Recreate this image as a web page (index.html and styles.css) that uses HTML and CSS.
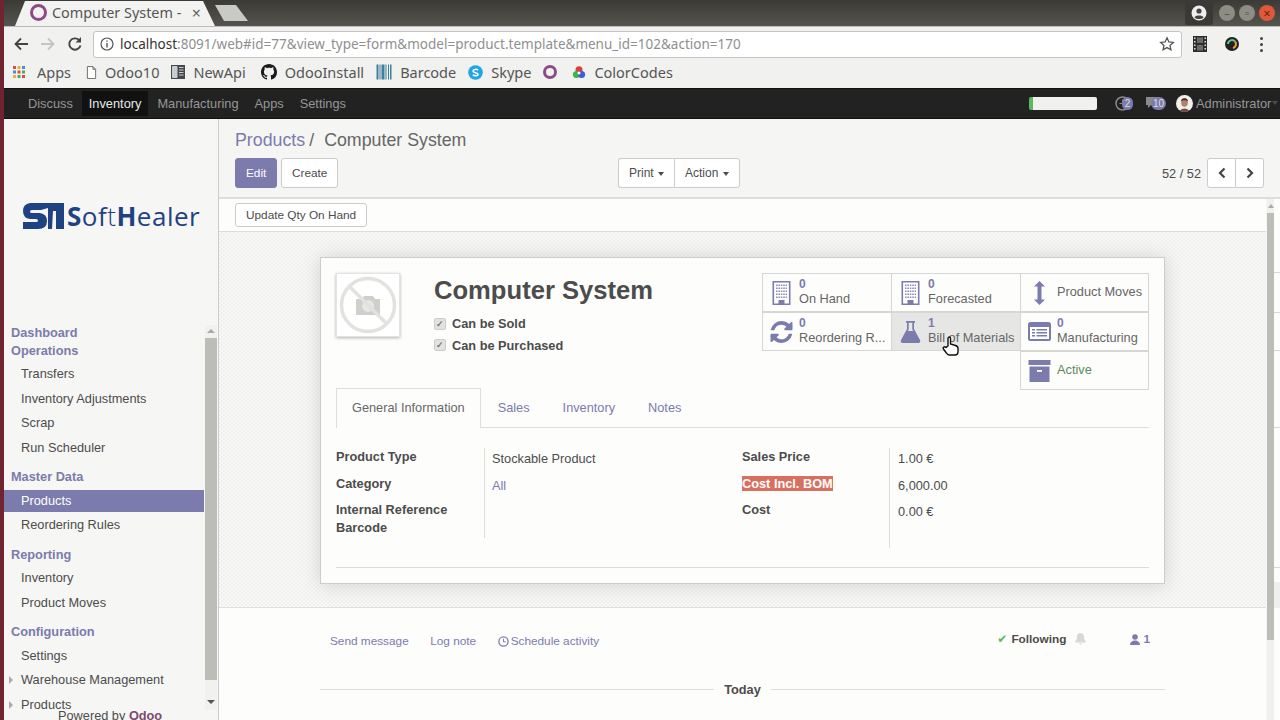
FILE: index.html
```html
<!DOCTYPE html>
<html lang="en">
<head>
    <meta charset="UTF-8">
    <title>Computer System - Odoo</title>
    <link rel="stylesheet" href="styles.css">
</head>
<body>
<div class="window">
    <div class="tabbar">
        <div class="tab">
            <span class="ring"></span>
            <span class="tab-title">Computer System -</span>
            <span class="tab-close">×</span>
        </div>
        <div class="new-tab"></div>
        <div class="win-controls">
            <span class="profile">
                <svg width="16" height="16" viewBox="0 0 16 16"><circle cx="8" cy="8" r="7.5" fill="#eee"/><circle cx="8" cy="6" r="2.6" fill="#444"/><path d="M3.5 12.5c1-2.6 8-2.6 9 0-2 2-7 2-9 0z" fill="#444"/></svg>
            </span>
            <span class="win-btn">–</span>
            <span class="win-btn">▫</span>
            <span class="win-btn win-close">×</span>
        </div>
    </div>

    <div class="toolbar">
        <svg class="nav-icon" width="16" height="16" viewBox="0 0 16 16"><path d="M15 8H3M8 2.500 2.500 8 8 13.500" fill="none" stroke="#444" stroke-width="1.800"/></svg>
        <svg class="nav-icon" width="16" height="16" viewBox="0 0 16 16"><path d="M1 8h12M8 2.500 13.500 8 8 13.500" fill="none" stroke="#c4c4c2" stroke-width="1.800"/></svg>
        <svg class="nav-icon nav-reload" width="16" height="16" viewBox="0 0 16 16"><path d="M13.500 9.500A5.700 5.700 0 1 1 12 4" fill="none" stroke="#444" stroke-width="1.900"/><path d="M14 1v5.500H8.500z" fill="#444"/></svg>
        <div class="omnibox">
            <svg width="14" height="14" viewBox="0 0 14 14"><circle cx="7" cy="7" r="6" fill="none" stroke="#555" stroke-width="1.200"/><path d="M7 6v4.500M7 3.500v1.300" stroke="#555" stroke-width="1.400"/></svg>
            <span class="url"><b>localhost</b>:8091/web#id=77&amp;view_type=form&amp;model=product.template&amp;menu_id=102&amp;action=170</span>
            <svg class="star" width="16" height="16" viewBox="0 0 16 16"><path d="M8 1.800l1.900 4.100 4.400.5-3.300 3 .9 4.400L8 11.600l-3.900 2.200.9-4.400-3.300-3 4.400-.5z" fill="none" stroke="#555" stroke-width="1.300"/></svg>
        </div>
        <svg class="ext" width="16" height="16" viewBox="0 0 16 16"><rect x="1" y="0" width="14" height="16" fill="#2e2e2e"/><path d="M2 1.500h1.500V3H2zM2 5h1.500v1.500H2zM2 8.500h1.500V10H2zM2 12h1.500v1.500H2zM12.500 1.500H14V3h-1.500zM12.500 5H14v1.500h-1.500zM12.500 8.500H14V10h-1.500zM12.500 12H14v1.500h-1.500z" fill="#ddd"/><path d="M5 1.500h6v5.500H5zM5 9h6v5.500H5z" fill="#6b6b6b"/></svg>
        <svg class="ext" width="16" height="16" viewBox="0 0 16 16"><circle cx="8" cy="8" r="7" fill="#222"/><path d="M4 8a4 4 0 0 1 7-2.500" fill="none" stroke="#5fc48a" stroke-width="2"/><path d="M11 5.500A4 4 0 0 1 9 12" fill="none" stroke="#e8a03c" stroke-width="2"/></svg>
        <span class="menu-dots"><i></i><i></i><i></i></span>
    </div>

    <div class="bookmarks">
        <span class="bm bm-wide">
            <svg width="12" height="12" viewBox="0 0 12 12"><path d="M0 0h3v3H0z" fill="#d9503f"/><path d="M4.500 0h3v3h-3z" fill="#e8b23a"/><path d="M9 0h3v3H9z" fill="#4a8bdc"/><path d="M0 4.500h3v3H0z" fill="#4a8bdc"/><path d="M4.500 4.500h3v3h-3z" fill="#d9503f"/><path d="M9 4.500h3v3H9z" fill="#55a85a"/><path d="M0 9h3v3H0z" fill="#e8b23a"/><path d="M4.500 9h3v3h-3z" fill="#55a85a"/><path d="M9 9h3v3H9z" fill="#d9503f"/></svg>
            Apps
        </span>
        <span class="bm">
            <svg width="11" height="15" viewBox="0 0 12 15"><path d="M1.500 1h6l3 3v10h-9zM7.500 1v3h3" fill="#fff" stroke="#666"/></svg>
            Odoo10
        </span>
        <span class="bm bm-wide">
            <svg width="14" height="14" viewBox="0 0 14 14"><rect width="14" height="14" fill="#45494f"/><path d="M1.500 1.500h4.500v11H1.500zM8 2.500h4.500M8 5h4.500M8 7.500h4.500M8 10h4.500" fill="#c9ccd0" stroke="#c9ccd0"/></svg>
            NewApi
        </span>
        <span class="bm">
            <svg width="16" height="16" viewBox="0 0 16 16"><path d="M8 0C3.580 0 0 3.580 0 8c0 3.540 2.290 6.530 5.470 7.590.4.070.55-.17.55-.38 0-.19-.01-.82-.01-1.490-2.010.37-2.530-.49-2.690-.94-.09-.23-.48-.94-.82-1.130-.28-.15-.68-.52-.01-.53.630-.01 1.080.58 1.230.82.720 1.210 1.870.87 2.330.66.070-.52.280-.87.510-1.070-1.780-.2-3.640-.89-3.640-3.950 0-.87.31-1.590.82-2.150-.08-.2-.36-1.020.08-2.120 0 0 .67-.21 2.200.82.640-.18 1.320-.27 2-.27s1.360.09 2 .27c1.530-1.040 2.200-.82 2.200-.82.44 1.100.16 1.920.08 2.120.51.560.82 1.270.82 2.150 0 3.070-1.870 3.750-3.650 3.950.29.25.54.73.54 1.480 0 1.070-.01 1.930-.01 2.200 0 .21.150.46.55.38A8.010 8.010 0 0 0 16 8c0-4.420-3.580-8-8-8z" fill="#1b1b1b"/></svg>
            OdooInstall
        </span>
        <span class="bm">
            <svg width="16" height="16" viewBox="0 0 16 15"><path d="M.5 0h2v15h-2zM3.500 0h1v15h-1zM5.500 0h3v15h-3zM9.500 0h1v15h-1zM12 0h1v15h-1zM14 0h1.500v15H14z" fill="#3d7f9e"/></svg>
            Barcode
        </span>
        <span class="bm">
            <svg width="15" height="15" viewBox="0 0 15 15"><circle cx="7.500" cy="7.500" r="7.300" fill="#22a6e3"/><path d="M10 5.200C9 4 5 4 5 6c0 2 5 1.300 5 3.300 0 2-4.200 1.700-5.200.4" fill="none" stroke="#fff" stroke-width="1.500"/></svg>
            Skype
        </span>
        <span class="bm bm-wide"><span class="ring ring-small"></span></span>
        <span class="bm">
            <svg width="14" height="15" viewBox="0 0 14 15"><circle cx="7" cy="4.800" r="3.500" fill="#e23c3c"/><circle cx="4.400" cy="9.600" r="3.500" fill="#3bb54a"/><circle cx="9.600" cy="9.600" r="3.500" fill="#3a5fd9"/><circle cx="7" cy="8" r="1.500" fill="#fff"/></svg>
            ColorCodes
        </span>
    </div>

    <nav class="topnav">
        <a>Discuss</a>
        <a class="active">Inventory</a>
        <a>Manufacturing</a>
        <a>Apps</a>
        <a>Settings</a>
        <div class="systray">
            <div class="progress"></div>
            <span class="badge-wrap">
                <svg width="15" height="15" viewBox="0 0 15 15"><circle cx="7.500" cy="7.500" r="6.500" fill="none" stroke="#8a8a8a" stroke-width="1.500"/><path d="M7.500 3.500v4h-3" fill="none" stroke="#8a8a8a"/></svg>
                <span class="badge">2</span>
            </span>
            <span class="badge-wrap badge-msg">
                <svg width="14" height="13" viewBox="0 0 14 13"><path d="M1 1h12v8H6l-3 3V9H1z" fill="#8a8a8a"/></svg>
                <span class="badge">10</span>
            </span>
            <span class="avatar">
                <svg width="17" height="17" viewBox="0 0 17 17"><circle cx="8.500" cy="8.500" r="8.500" fill="#f3f0ec"/><ellipse cx="8.500" cy="7.500" rx="3.300" ry="4.300" fill="#b5806a"/><path d="M5 6.500C4.800 2 12.200 2 12 6.500 10.500 4.800 6.500 4.800 5 6.500z" fill="#3d2d28"/><path d="M4 16c.7-3.500 8.300-3.500 9 0-2.500 1.200-6.500 1.200-9 0z" fill="#6e4a42"/></svg>
            </span>
            <span class="user">Administrator</span>
            <i class="caret caret-user"></i>
        </div>
    </nav>

    <div class="app">
        <aside class="sidebar">
            <div class="logo">
                <svg width="41" height="26" viewBox="0 0 41 26"><path d="M0 8Q0 1 7 0H41V26H33V8H30L29 26H25V5L18 7H9Q7 7 7 8.500 7 10 9 10H17Q24 11 24 18 24 26 15 26H0V19H13Q15 19 15 17.500 15 16 13 16H7Q0 15 0 8Z" fill="#1f4283"/></svg>
                <span class="logo-text"><b>S</b>of<span class="logo-t">t</span><b>H</b>ealer</span>
            </div>
            <div class="menu-wrap">
                <div class="menu">
                    <div class="menu-head">Dashboard</div>
                    <div class="menu-head menu-head-tight">Operations</div>
                    <a class="menu-item">Transfers</a>
                    <a class="menu-item">Inventory Adjustments</a>
                    <a class="menu-item">Scrap</a>
                    <a class="menu-item">Run Scheduler</a>
                    <div class="menu-head menu-section">Master Data</div>
                    <a class="menu-item selected">Products</a>
                    <a class="menu-item">Reordering Rules</a>
                    <div class="menu-head menu-section">Reporting</div>
                    <a class="menu-item">Inventory</a>
                    <a class="menu-item">Product Moves</a>
                    <div class="menu-head menu-section">Configuration</div>
                    <a class="menu-item">Settings</a>
                    <a class="menu-item folder">Warehouse Management</a>
                    <a class="menu-item folder">Products</a>
                </div>
                <div class="side-scroll">
                    <span class="arrow-up"></span>
                    <span class="side-thumb"></span>
                    <span class="arrow-down"></span>
                </div>
            </div>
            <div class="powered">Powered by <b>Odoo</b></div>
        </aside>

        <main class="main">
            <div class="control-panel">
                <div class="breadcrumb"><a>Products</a><span class="slash">/</span><span>Computer System</span></div>
                <div class="cp-row">
                    <div class="cp-left">
                        <button class="btn btn-primary">Edit</button>
                        <button class="btn">Create</button>
                    </div>
                    <div class="cp-mid">
                        <button class="btn btn-join">Print <i class="caret"></i></button>
                        <button class="btn btn-join-right">Action <i class="caret"></i></button>
                    </div>
                    <div class="pager">
                        <span>52 / 52</span>
                        <div class="pager-btns">
                            <button class="btn btn-page">
                                <svg width="10" height="12" viewBox="0 0 10 12"><path d="M7.500 1.500 3 6l4.500 4.500" fill="none" stroke="#444" stroke-width="2.200"/></svg>
                            </button>
                            <button class="btn btn-page">
                                <svg width="10" height="12" viewBox="0 0 10 12"><path d="M2.500 1.500 7 6l-4.500 4.500" fill="none" stroke="#444" stroke-width="2.200"/></svg>
                            </button>
                        </div>
                    </div>
                </div>
            </div>

            <div class="content-row">
                <div class="content">
                    <div class="statusbar"><button class="btn">Update Qty On Hand</button></div>
                    <div class="sheet-bg">
                        <div class="sheet">
                            <div class="sheet-top">
                                <div class="product-img">
                                    <svg width="58" height="58" viewBox="0 0 58 58">
                                        <path d="M17 23h6l2-3h9l2 3h5v16H17z" fill="#cfcfcc"/>
                                        <circle cx="29" cy="30" r="6" fill="#e6e6e3"/>
                                        <circle cx="29" cy="29" r="26.500" fill="none" stroke="#e2e2df" stroke-width="3.500"/>
                                        <path d="M10 10l38 38" stroke="#e2e2df" stroke-width="3.500"/>
                                    </svg>
                                </div>
                                <div class="title-block">
                                    <h1>Computer System</h1>
                                    <label class="check"><i class="box">✓</i>Can be Sold</label>
                                    <label class="check"><i class="box">✓</i>Can be Purchased</label>
                                </div>
                                <div class="stats">
                                    <a class="stat">
                                        <svg width="20" height="24" viewBox="0 0 20 24"><path d="M1.800 .8h16.400v22.400H1.800z" fill="#fff" stroke="#7c7bad" stroke-width="1.600"/><path d="M4.500 4.200h11M4.500 7.200h11M4.500 10.200h11M4.500 13.200h11M4.500 16.200h11" fill="none" stroke="#8f8ebb" stroke-width="1.600" stroke-dasharray="1.600 .8"/><path d="M7 19h6v5H7z" fill="#7c7bad"/></svg>
                                        <span class="stat-text"><b>0</b>On Hand</span>
                                    </a>
                                    <a class="stat">
                                        <svg width="20" height="24" viewBox="0 0 20 24"><path d="M1.800 .8h16.400v22.400H1.800z" fill="#fff" stroke="#7c7bad" stroke-width="1.600"/><path d="M4.500 4.200h11M4.500 7.200h11M4.500 10.200h11M4.500 13.200h11M4.500 16.200h11" fill="none" stroke="#8f8ebb" stroke-width="1.600" stroke-dasharray="1.600 .8"/><path d="M7 19h6v5H7z" fill="#7c7bad"/></svg>
                                        <span class="stat-text"><b>0</b>Forecasted</span>
                                    </a>
                                    <a class="stat">
                                        <svg width="12" height="24" viewBox="0 0 12 24"><path d="M6 0l5.500 5.500H8v13h3.500L6 24 .5 18.500H4v-13H.5z" fill="#7c7bad"/></svg>
                                        <span class="stat-text stat-single">Product Moves</span>
                                    </a>
                                    <a class="stat">
                                        <svg width="22" height="22" viewBox="128 128 1536 1536"><path d="M1639 1056q0 5-1 7-64 268-268 434.500t-478 166.500q-146 0-282.500-55t-243.500-157l-129 129q-19 19-45 19t-45-19-19-45v-448q0-26 19-45t45-19h448q26 0 45 19t19 45-19 45l-137 137q71 66 161 102t187 36q134 0 250-65t186-179q11-17 53-117 8-23 30-23h192q13 0 22.500 9.500t9.500 22.500zm25-800v448q0 26-19 45t-45 19h-448q-26 0-45-19t-19-45 19-45l138-138q-148-137-349-137-134 0-250 65t-186 179q-11 17-53 117-8 23-30 23h-199q-13 0-22.500-9.500t-9.500-22.500v-7q65-268 270-434.500t480-166.500q146 0 284 55.500t245 156.500l130-129q19-19 45-19t45 19 19 45z" fill="#7c7bad"/></svg>
                                        <span class="stat-text"><b>0</b>Reordering R...</span>
                                    </a>
                                    <a class="stat stat-hover">
                                        <svg width="20" height="22" viewBox="0 0 20 22"><path d="M5.500 0h9v1.800h-1V8l6 11c.7 1.300 0 3-1.500 3H2c-1.500 0-2.200-1.700-1.500-3l6-11V1.800h-1z" fill="#7c7bad"/><path d="M8.200 1.800h3.600v6.700l1 1.500H7.200l1-1.500z" fill="#e6e6e4"/></svg>
                                        <span class="stat-text"><b>1</b>Bill of Materials</span>
                                    </a>
                                    <a class="stat">
                                        <svg width="23" height="19" viewBox="0 0 23 19"><rect x="0" y="0" width="23" height="19" rx="2.500" fill="#7c7bad"/><rect x="2" y="5" width="19" height="12" fill="#fff"/><path d="M4 7h3v1.600H4zM4 10h3v1.600H4zM4 13h3v1.600H4zM8.500 7H19v1.600H8.500zM8.500 10H19v1.600H8.500zM8.500 13H19v1.600H8.500z" fill="#7c7bad"/></svg>
                                        <span class="stat-text"><b>0</b>Manufacturing</span>
                                    </a>
                                    <a class="stat stat-active">
                                        <svg width="22" height="22" viewBox="0 0 22 22"><path d="M0 0h22v5H0zM1 6.500h20V22H1z" fill="#7c7bad"/><path d="M8.500 10h5v1.800h-5z" fill="#fff"/></svg>
                                        <span class="stat-text stat-single stat-green">Active</span>
                                    </a>
                                </div>
                            </div>

                            <div class="tabs">
                                <a class="form-tab current">General Information</a>
                                <a class="form-tab">Sales</a>
                                <a class="form-tab">Inventory</a>
                                <a class="form-tab">Notes</a>
                            </div>

                            <div class="groups">
                                <div class="group group-left">
                                    <div class="labels">
                                        <span class="lbl">Product Type</span>
                                        <span class="lbl">Category</span>
                                        <span class="lbl lbl-tight">Internal Reference</span>
                                        <span class="lbl">Barcode</span>
                                    </div>
                                    <div class="values">
                                        <span class="val">Stockable Product</span>
                                        <span class="val link">All</span>
                                    </div>
                                </div>
                                <div class="group group-right">
                                    <div class="labels">
                                        <span class="lbl">Sales Price</span>
                                        <span class="lbl"><mark>Cost Incl. BOM</mark></span>
                                        <span class="lbl">Cost</span>
                                    </div>
                                    <div class="values values-tall">
                                        <span class="val">1.00 €</span>
                                        <span class="val">6,000.00</span>
                                        <span class="val">0.00 €</span>
                                    </div>
                                </div>
                            </div>
                            <div class="sheet-line"></div>
                        </div>
                    </div>

                    <div class="chatter">
                        <div class="chatter-top">
                            <a>Send message</a>
                            <a>Log note</a>
                            <a class="schedule"><svg width="11" height="11" viewBox="0 0 11 11"><circle cx="5.500" cy="5.500" r="4.600" fill="none" stroke="#7c7bad" stroke-width="1.300"/><path d="M5.500 2.800v3h2.300" fill="none" stroke="#7c7bad"/></svg>Schedule activity</a>
                            <div class="chatter-right">
                                <span class="following"><i class="tick">✔</i>Following</span>
                                <svg width="11" height="12" viewBox="0 0 11 12"><path d="M5.500 0C3 0 2 2 2 4c0 3-2 4-2 5.500h11C11 8 9 7 9 4c0-2-1-4-3.500-4zM4 10.300h3L5.500 12z" fill="#d8d8d5"/></svg>
                                <span class="followers"><svg width="10" height="11" viewBox="0 0 10 11"><circle cx="5" cy="3" r="2.800" fill="#7c7bad"/><path d="M0 11c0-6 10-6 10 0z" fill="#7c7bad"/></svg>1</span>
                            </div>
                        </div>
                        <div class="today"><span>Today</span></div>
                    </div>
                </div>
                <div class="main-scroll">
                    <span class="arrow-up"></span>
                    <span class="main-thumb"></span>
                </div>
                <div class="edge"></div>
            </div>
        </main>
    </div>

    <svg class="hand" width="18" height="20" viewBox="0 0 18 20"><path d="M6 10V2.500C6 .5 8.500.5 8.500 2.500V8l5 1.500c2 .6 2.500 1.500 2.500 3V16c0 1.500-1 3-3 3H7c-1.500 0-2-1-3-2.500L1.500 13c-1-1.500 1-3 2.500-1.500z" fill="#fff" stroke="#111" stroke-width="1.400"/></svg>
</div>
</body>
</html>
```

FILE: styles.css
```css
* {
    box-sizing: border-box;
}
html, body {
    margin: 0;
    padding: 0;
    height: 100%;
    overflow: hidden;
}
body {
    font-family: "Liberation Sans", Arial, sans-serif;
    font-size: 12.750px;
    color: #4c4c4c;
}
.window {
    position: relative;
    width: 1280px;
    height: 720px;
    border-left: 4px solid #6f2430;
    display: flex;
    flex-direction: column;
    overflow: hidden;
    background: #f6f6f4;
}

/* browser chrome */
.tabbar {
    height: 26px;
    flex: none;
    display: flex;
    align-items: flex-end;
    padding-left: 11px;
    background: linear-gradient(#3b3a36, #55544e);
    font-family: "Noto Sans", sans-serif;
}
.tab {
    width: 200px;
    height: 25px;
    flex: none;
    display: flex;
    align-items: center;
    padding: 0 14px 2px 15px;
    background: #f2f2f0;
    clip-path: polygon(0 100%, 10px 0, 188px 0, 100% 100%);
    font-size: 14.400px;
    color: #555;
}
.tab-title {
    flex: 1;
    margin-left: 5px;
    white-space: nowrap;
}
.tab-close {
    font-size: 16px;
    color: #666;
}
.ring {
    width: 17px;
    height: 17px;
    border: 3px solid #8e4a87;
    border-radius: 50%;
    flex: none;
    display: inline-block;
}
.ring-small {
    width: 14px;
    height: 14px;
}
.new-tab {
    width: 33px;
    height: 16px;
    margin: 0 0 5px 0;
    background: #c9c9c5;
    clip-path: polygon(0 0, 21px 0, 100% 100%, 9px 100%);
}
.win-controls {
    margin-left: auto;
    height: 26px;
    display: flex;
    align-items: center;
    gap: 4px;
    padding-right: 5px;
}
.profile {
    width: 28px;
    height: 24px;
    display: flex;
    align-items: center;
    justify-content: center;
    background: #3a3935;
    border-radius: 3px;
    margin-right: 2px;
}
.win-btn {
    width: 16px;
    height: 16px;
    border-radius: 50%;
    background: #8d8c85;
    color: #56554f;
    font-size: 11px;
    line-height: 16px;
    text-align: center;
}
.win-close {
    background: #e0583a;
    color: #6b2012;
    font-size: 13px;
}
.toolbar {
    height: 35px;
    flex: none;
    display: flex;
    align-items: center;
    padding-left: 9px;
    background: #f1f1ef;
    border-top: 1px solid #bbb;
}
.nav-icon {
    margin-right: 11px;
    flex: none;
}
.nav-reload {
    margin-right: 10px;
}
.omnibox {
    width: 1089px;
    height: 27px;
    flex: none;
    display: flex;
    align-items: center;
    gap: 6px;
    padding: 0 6px;
    background: #fff;
    border: 1px solid #c4c4c2;
    border-radius: 3px;
    font-family: "Noto Sans", sans-serif;
    font-size: 13.500px;
    color: #8f8f8f;
}
.url {
    flex: 1;
    white-space: nowrap;
    overflow: hidden;
}
.url b {
    font-weight: 400;
    color: #333;
}
.ext {
    margin-left: 10px;
    flex: none;
    margin-right: 6px;
}
.menu-dots {
    display: flex;
    flex-direction: column;
    gap: 3px;
    margin-left: 14px;
}
.menu-dots i {
    width: 3px;
    height: 3px;
    background: #444;
    border-radius: 50%;
}
.bookmarks {
    height: 27px;
    flex: none;
    display: flex;
    align-items: center;
    gap: 12px;
    padding: 0 0 5px 9px;
    background: #f1f1ef;
    font-family: "Noto Sans", sans-serif;
    font-size: 14.500px;
    color: #555;
}
.bm {
    display: flex;
    align-items: center;
    gap: 8px;
}
.bm-wide {
    margin-right: 3px;
}
.bm:first-child {
    gap: 12px;
}

/* odoo top menu */
.topnav {
    height: 31px;
    flex: none;
    display: flex;
    align-items: center;
    gap: 2px;
    padding: 0 0 1px 17px;
    background: #222;
    border-top: 1px solid #111;
    border-bottom: 1px solid #111;
    color: #969696;
    font-size: 12.800px;
}
.topnav a {
    height: 25px;
    line-height: 25px;
    padding: 0 7px;
}
.topnav a.active {
    background: #111;
    color: #e8e8e8;
}
.systray {
    margin-left: auto;
    display: flex;
    align-items: center;
    width: 251px;
    flex: none;
}
.progress {
    width: 68px;
    height: 13px;
    margin-right: 18px;
    flex: none;
    background: linear-gradient(90deg, #5cb85c 4px, #f0f0ee 4px);
    border-radius: 2px;
}
.badge-wrap {
    position: relative;
    width: 17px;
    height: 15px;
    margin-right: 13px;
    flex: none;
}
.badge-msg {
    width: 20px;
    margin: 0;
}
.badge {
    position: absolute;
    top: 1px;
    right: -1px;
    min-width: 11px;
    height: 13px;
    padding: 0 2px;
    border-radius: 7px;
    background: #7c7bad;
    color: #ddd;
    font-size: 10px;
    line-height: 13px;
    text-align: center;
}
.avatar {
    margin: 0 3px 0 11px;
    height: 17px;
    flex: none;
}
.user {
    white-space: nowrap;
}
.caret-user {
    margin-left: 3px;
    flex: none;
    border-top-color: #969696;
}

/* app */
.app {
    flex: 1;
    min-height: 0;
    display: flex;
}
.sidebar {
    width: 215px;
    flex: none;
    display: flex;
    flex-direction: column;
    overflow: hidden;
    background: #f6f6f4;
    border-right: 1px solid #ccc;
}
.logo {
    height: 206px;
    flex: none;
    display: flex;
    align-items: flex-start;
    gap: 3px;
    padding: 84px 0 0 19px;
}
.logo-text {
    font-family: "Open Sans", sans-serif;
    font-size: 26px;
    line-height: 26px;
    color: #1f4283;
    letter-spacing: .5px;
}
.logo-text b {
    font-weight: 700;
}
.logo-t {
    font-weight: 300;
}
.menu-wrap {
    height: 385px;
    flex: none;
    display: flex;
}
.menu {
    width: 200px;
    flex: none;
    overflow: hidden;
}
.menu-head {
    font-weight: 700;
    color: #7c7bad;
    padding-left: 7px;
    line-height: 18px;
}
.menu-head:first-child {
    margin-top: -1px;
}
.menu-section {
    margin-top: 9.500px;
    margin-bottom: 3.500px;
}
.menu-head-tight {
    margin-bottom: 3px;
}
.menu-item {
    display: block;
    line-height: 22px;
    margin-bottom: 2.500px;
    padding-left: 17px;
    color: #4c4c4c;
    position: relative;
    white-space: nowrap;
}
.selected {
    background: #7c7bad;
    color: #fff;
}
.folder::before {
    content: "";
    position: absolute;
    left: 5px;
    top: 7px;
    border-left: 4px solid #aaa;
    border-top: 4px solid transparent;
    border-bottom: 4px solid transparent;
}
.side-scroll {
    width: 12px;
    margin-left: 1px;
    flex: none;
    display: flex;
    flex-direction: column;
    align-items: center;
    background: #f1f1ef;
}
.arrow-up, .arrow-down {
    flex: none;
    width: 0;
    height: 0;
    border-left: 4px solid transparent;
    border-right: 4px solid transparent;
}
.arrow-up {
    border-bottom: 4px solid #aaa;
    margin: 4px 0;
}
.arrow-down {
    border-top: 4px solid #555;
    margin-top: 20px;
}
.side-thumb {
    width: 100%;
    height: 342px;
    flex: none;
    margin-top: 1px;
    background: #bdbdb8;
}
.powered {
    padding-left: 54px;
    line-height: 14px;
    color: #4c4c4c;
    white-space: nowrap;
    margin-top: -1px;
}
.powered b {
    color: #7c4b6e;
}

/* main */
.main {
    flex: 1;
    min-width: 0;
    display: flex;
    flex-direction: column;
}
.control-panel {
    height: 80px;
    flex: none;
    padding: 9px 16px 0;
    background: #f5f5f3;
    border-bottom: 2px solid #ddd;
}
.breadcrumb {
    font-size: 17.800px;
    line-height: 24px;
    color: #666;
}
.breadcrumb a {
    color: #7c7bad;
}
.slash {
    margin: 0 10px 0 4px;
}
.cp-row {
    display: flex;
    align-items: center;
    margin-top: 6px;
}
.cp-left {
    width: 383px;
    flex: none;
    display: flex;
    gap: 4px;
}
.cp-mid {
    display: flex;
}
.cp-mid .btn {
    font-size: 12px;
}
.btn {
    height: 30px;
    padding: 0 10px;
    font-family: inherit;
    font-size: 11.800px;
    color: #4c4c4c;
    background: #fff;
    border: 1px solid #ccc;
    border-radius: 3px;
}
.btn-primary {
    width: 42px;
    background: #7c7bad;
    border-color: #7c7bad;
    color: #fff;
}
.btn-join {
    border-radius: 3px 0 0 3px;
    border-right: 0;
}
.btn-join-right {
    border-radius: 0 3px 3px 0;
}
.caret {
    display: inline-block;
    margin-left: 1px;
    vertical-align: middle;
    border-top: 4px solid #4c4c4c;
    border-left: 3.500px solid transparent;
    border-right: 3.500px solid transparent;
}
.pager {
    margin-left: auto;
    display: flex;
    align-items: center;
    gap: 6px;
}
.pager-btns {
    display: flex;
}
.btn-page {
    width: 29px;
    padding: 0;
    display: flex;
    align-items: center;
    justify-content: center;
    border-radius: 3px 0 0 3px;
}
.btn-page + .btn-page {
    width: 28px;
    border-left: 0;
    border-radius: 0 3px 3px 0;
}
.content-row {
    flex: 1;
    min-height: 0;
    display: flex;
}
.content {
    flex: 1;
    min-width: 0;
}
.main-scroll {
    width: 7px;
    margin-left: 1px;
    flex: none;
    display: flex;
    flex-direction: column;
    align-items: center;
    background: #f0f0ee;
}
.main-scroll .arrow-up {
    border-left-width: 3px;
    border-right-width: 3px;
    margin: 5px 0;
}
.main-thumb {
    width: 100%;
    height: 427px;
    flex: none;
    background: #bdbdb8;
}
/* sliver of the window behind, cut off at the screen edge */
.edge {
    width: 6px;
    flex: none;
    background-color: #fdfdfb;
    background-image:
        linear-gradient(#d8d8d6, #d8d8d6),
        linear-gradient(#d8d8d6, #d8d8d6),
        linear-gradient(#d8d8d6, #d8d8d6),
        linear-gradient(#d8d8d6, #d8d8d6),
        linear-gradient(#d8d8d6, #d8d8d6),
        linear-gradient(#efefed, #efefed);
    background-repeat: no-repeat;
    background-size: 100% 1px, 100% 1px, 100% 1px, 100% 1px, 100% 1px, 100% 26px;
    background-position: 0 73px, 0 113px, 0 151px, 0 228px, 0 368px, 0 383px;
}
.statusbar {
    height: 33px;
    padding: 4px 16px 0;
    background: #fdfdfb;
    border-bottom: 1px solid #ddd;
}
.statusbar .btn {
    height: 24px;
}
.sheet-bg {
    height: 376px;
    padding: 25px 101px 0 101px;
    background-color: #f8f8f6;
    background-image: conic-gradient(#f0f0ee 25%, transparent 0 50%, #f0f0ee 0 75%, transparent 0);
    background-size: 4px 4px;
    border-bottom: 1px solid #e0e0de;
}
.sheet {
    height: 327px;
    padding: 15px 15px 0;
    background: #fdfdfb;
    border: 1px solid #ccc;
    box-shadow: 0 1px 18px rgba(0, 0, 0, .14);
}
.sheet-top {
    display: flex;
    height: 115px;
}
.product-img {
    width: 64px;
    height: 64px;
    flex: none;
    display: flex;
    align-items: center;
    justify-content: center;
    background: #fff;
    border: 1px solid #e4e4e2;
    box-shadow: 0 1px 3px rgba(0, 0, 0, .3);
}
.title-block {
    width: 328px;
    flex: none;
    margin-left: 34px;
}
h1 {
    margin: 0 0 6px;
    font-size: 25.600px;
    line-height: 34px;
    color: #4c4c4c;
}
.check {
    display: flex;
    align-items: center;
    gap: 6px;
    font-weight: 700;
    line-height: 21.500px;
}
.box {
    width: 12px;
    height: 12px;
    border: 1px solid #ccc;
    border-radius: 2px;
    background: #e2e2e0;
    color: #777;
    font-size: 9px;
    font-style: normal;
    line-height: 11px;
    text-align: center;
}
.stats {
    display: grid;
    grid-template-columns: 129px 129px 128px;
    grid-auto-rows: 39px;
    align-content: start;
}
.stat {
    display: flex;
    align-items: center;
    height: 39px;
    padding-left: 8px;
    border: 1px solid #d6d6d4;
    margin: 0 -1px -1px 0;
    background: #fdfdfb;
}
.stat svg {
    width: 23px;
    flex: none;
    margin-left: -1px;
}
.stat-active {
    grid-column: 3;
}
.stat-hover {
    background: #e6e6e4;
}
.stat-text {
    margin-left: 6px;
    padding-top: 2px;
    display: flex;
    flex-direction: column;
    color: #666;
    line-height: 18px;
    white-space: nowrap;
}
.stat-text b {
    font-size: 12px;
    line-height: 12px;
    margin-top: -1px;
    color: #7c7bad;
}
.stat-single {
    padding: 0 0 2px;
}
.stat-green {
    color: #5c8a5c;
}
.tabs {
    display: flex;
    height: 40px;
    border-bottom: 1px solid #ddd;
}
.form-tab {
    height: 40px;
    line-height: 40px;
    padding: 0 16px;
    margin-right: 1px;
    color: #7c7bad;
}
.form-tab.current {
    line-height: 38px;
    padding: 0 15px;
    color: #666;
    background: #fdfdfb;
    border: 1px solid #ddd;
    border-bottom: 0;
}
.groups {
    display: flex;
    padding-top: 20px;
}
.group {
    display: flex;
}
.group-left {
    width: 406px;
}
.labels {
    width: 148px;
    flex: none;
    display: flex;
    flex-direction: column;
}
.group-right .labels {
    width: 147px;
}
.lbl {
    font-weight: 700;
    line-height: 18px;
    margin-bottom: 8.500px;
}
.lbl-tight {
    margin-bottom: 0;
}
.lbl mark {
    background: #d9705f;
    color: #fff;
}
.values {
    height: 90px;
    padding-left: 7px;
    border-left: 1px solid #ddd;
    display: flex;
    flex-direction: column;
}
.values-tall {
    height: 100px;
    padding-left: 8px;
}
.val {
    line-height: 18px;
    margin: 2px 0 6.500px;
}
.link {
    color: #7c7bad;
}
.sheet-line {
    margin-top: 19px;
    border-top: 1px solid #ddd;
}
.chatter {
    background: #fdfdfb;
    height: 112px;
    padding: 0 101px;
}
.chatter-top {
    display: flex;
    align-items: center;
    height: 66px;
    gap: 21.500px;
    padding-left: 10px;
    font-size: 11.800px;
    color: #7c7bad;
}
.schedule {
    display: flex;
    align-items: center;
    gap: 2px;
}
.chatter-right {
    margin-left: auto;
    display: flex;
    align-items: center;
    gap: 9px;
    margin-top: -4px;
    margin-right: 15px;
}
.following {
    font-weight: 700;
    color: #4c4c4c;
}
.tick {
    color: #5cb85c;
    font-style: normal;
    margin-right: 4px;
    font-family: "DejaVu Sans", sans-serif;
    font-size: 12px;
}
.followers {
    display: flex;
    align-items: center;
    gap: 3px;
    margin-left: 35px;
    font-weight: 700;
}
.today {
    display: flex;
    align-items: center;
    gap: 10px;
    margin-top: 8px;
    font-weight: 700;
    color: #4c4c4c;
}
.today::before, .today::after {
    content: "";
    flex: 1;
    border-top: 1px solid #ddd;
}

/* mouse pointer sits over the button */
.hand {
    position: absolute;
    left: 938px;
    top: 336px;
}
```
